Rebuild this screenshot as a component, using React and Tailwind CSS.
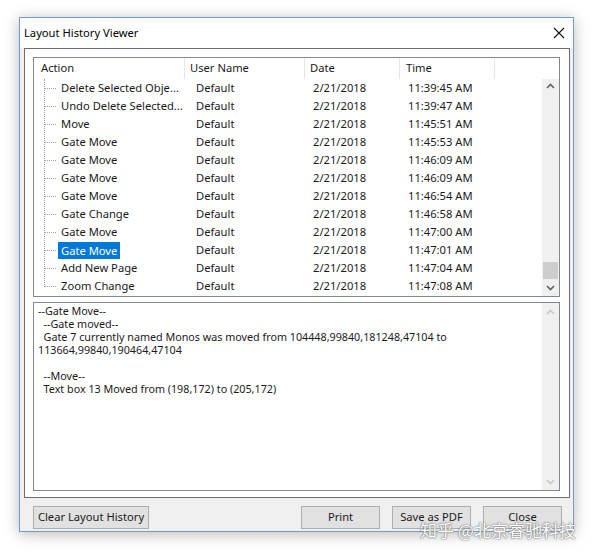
import React from "react";

const rows = [
  ["Delete Selected Obje...", "11:39:45 AM"],
  ["Undo Delete Selected...", "11:39:47 AM"],
  ["Move", "11:45:51 AM"],
  ["Gate Move", "11:45:53 AM"],
  ["Gate Move", "11:46:09 AM"],
  ["Gate Move", "11:46:09 AM"],
  ["Gate Move", "11:46:54 AM"],
  ["Gate Change", "11:46:58 AM"],
  ["Gate Move", "11:47:00 AM"],
  ["Gate Move", "11:47:01 AM"],
  ["Add New Page", "11:47:04 AM"],
  ["Zoom Change", "11:47:08 AM"],
];

const Chevron = ({ up, color }) => (
  <svg width="9" height="6" viewBox="0 0 9 6">
    <path
      d={up ? "M1 5 L4.5 1.5 L8 5" : "M1 1 L4.5 4.5 L8 1"}
      fill="none"
      stroke={color}
      strokeWidth="1.6"
    />
  </svg>
);

export default function App() {
  return (
    <div
      className="relative w-[597px] h-[557px] bg-white pl-[19px] pt-[17px]"
      style={{ fontFamily: '"Noto Sans", "Liberation Sans", sans-serif' }}
    >
      <div className="w-[555px] h-[515px] border border-[#6f9dd0] bg-[#f0f0f0] flex flex-col shadow-[0_2px_14px_rgba(0,0,0,0.28)]">
        {/* title bar */}
        <div className="h-[30px] bg-white flex items-center justify-between pl-[4px] pr-[8px] shrink-0">
          <span className="text-[11.2px] text-black whitespace-nowrap">Layout History Viewer</span>
          <svg width="12" height="12" viewBox="0 0 12 12">
            <path d="M1 1 L11 11 M11 1 L1 11" stroke="#111" strokeWidth="1.1" />
          </svg>
        </div>
        {/* main box */}
        <div className="ml-[4px] mr-[3px] h-[450px] border border-[#6e6e6e] bg-white pt-[8px] pl-[8px] pr-[9px] flex flex-col gap-[5px]">
          {/* list */}
          <div className="h-[240px] border border-[#828790] flex shrink-0">
            <div className="flex-1 flex flex-col">
              <div className="h-[21px] flex text-[11.2px] text-[#1a1a1a] items-center">
                <div className="w-[151px] pl-[7px] border-r border-[#e5e5e5] h-full flex items-center">Action</div>
                <div className="w-[120px] pl-[5px] border-r border-[#e5e5e5] h-full flex items-center">User Name</div>
                <div className="w-[95px] pl-[5px] border-r border-[#e5e5e5] h-full flex items-center">Date</div>
                <div className="w-[95px] pl-[6px] border-r border-[#e5e5e5] h-full flex items-center">Time</div>
              </div>
              <div className="relative flex flex-col">
                <div className="absolute left-[10px] top-0 h-[208px] border-l border-dotted border-[#a0a0a0]" />
                {rows.map(([a, t], i) => {
                  const sel = i === 9;
                  return (
                    <div key={i} className="h-[18px] flex items-center text-[11.2px] text-[#1a1a1a] whitespace-nowrap">
                      <div className="w-[151px] flex items-center h-full">
                        <div className="ml-[11px] w-[11px] border-t border-dotted border-[#a0a0a0]" />
                        <span
                          className={
                            sel
                              ? "ml-[2px] px-[3px] bg-[#0078d7] text-white h-[17px] leading-[17px]"
                              : "ml-[5px]"
                          }
                        >
                          {a}
                        </span>
                      </div>
                      <div className="w-[120px] pl-[11px]">Default</div>
                      <div className="w-[95px] pl-[8px]">2/21/2018</div>
                      <div className="w-[95px] pl-[8px]">{t}</div>
                    </div>
                  );
                })}
              </div>
            </div>
            {/* scrollbar */}
            <div className="w-[17px] bg-[#f0f0f0] flex flex-col items-center mt-[21px]">
              <div className="h-[14px] flex items-center justify-center">
                <Chevron up color="#606060" />
              </div>
              <div className="flex-1" />
              <div className="w-[15px] h-[17px] bg-[#cdcdcd]" />
              <div className="h-[17px] flex items-center justify-center">
                <Chevron color="#606060" />
              </div>
            </div>
          </div>
          {/* text panel */}
          <div className="h-[189px] border border-[#828790] flex shrink-0">
            <div className="flex-1 pl-[4px] pt-[2px] text-[10.75px] leading-[13px] text-[#1a1a1a] whitespace-pre">
              <div>--Gate Move--</div>
              <div>  --Gate moved--</div>
              <div>  Gate 7 currently named Monos was moved from 104448,99840,181248,47104 to</div>
              <div>113664,99840,190464,47104</div>
              <div>&nbsp;</div>
              <div>  --Move--</div>
              <div>  Text box 13 Moved from (198,172) to (205,172)</div>
            </div>
            <div className="w-[17px] bg-[#f0f0f0] flex flex-col items-center justify-between">
              <div className="h-[17px] flex items-center justify-center">
                <Chevron up color="#c8c8c8" />
              </div>
              <div className="h-[17px] flex items-center justify-center">
                <Chevron color="#c8c8c8" />
              </div>
            </div>
          </div>
        </div>
        {/* buttons */}
        <div className="flex items-center pl-[13px] pt-[8px] text-[11.2px] text-[#1a1a1a] whitespace-nowrap">
          <button className="h-[23px] w-[116px] bg-[#e1e1e1] border border-[#adadad]">Clear Layout History</button>
          <div className="flex-1" />
          <button className="h-[23px] w-[79px] bg-[#e1e1e1] border border-[#adadad]">Print</button>
          <button className="h-[23px] w-[79px] ml-[12px] bg-[#e1e1e1] border border-[#adadad]">Save as PDF</button>
          <button className="h-[23px] w-[79px] ml-[12px] mr-[11px] bg-[#e1e1e1] border border-[#adadad]">Close</button>
        </div>
      </div>
      {/* watermark */}
      <div
        className="absolute left-[420px] top-[517px] text-[17px] leading-[26px] text-white whitespace-nowrap [text-shadow:0_0_2px_#777,0_0_1px_#555]"
        style={{ fontFamily: '"Noto Sans CJK SC", sans-serif' }}
      >
        知乎 @北京睿驰科技
      </div>
    </div>
  );
}
